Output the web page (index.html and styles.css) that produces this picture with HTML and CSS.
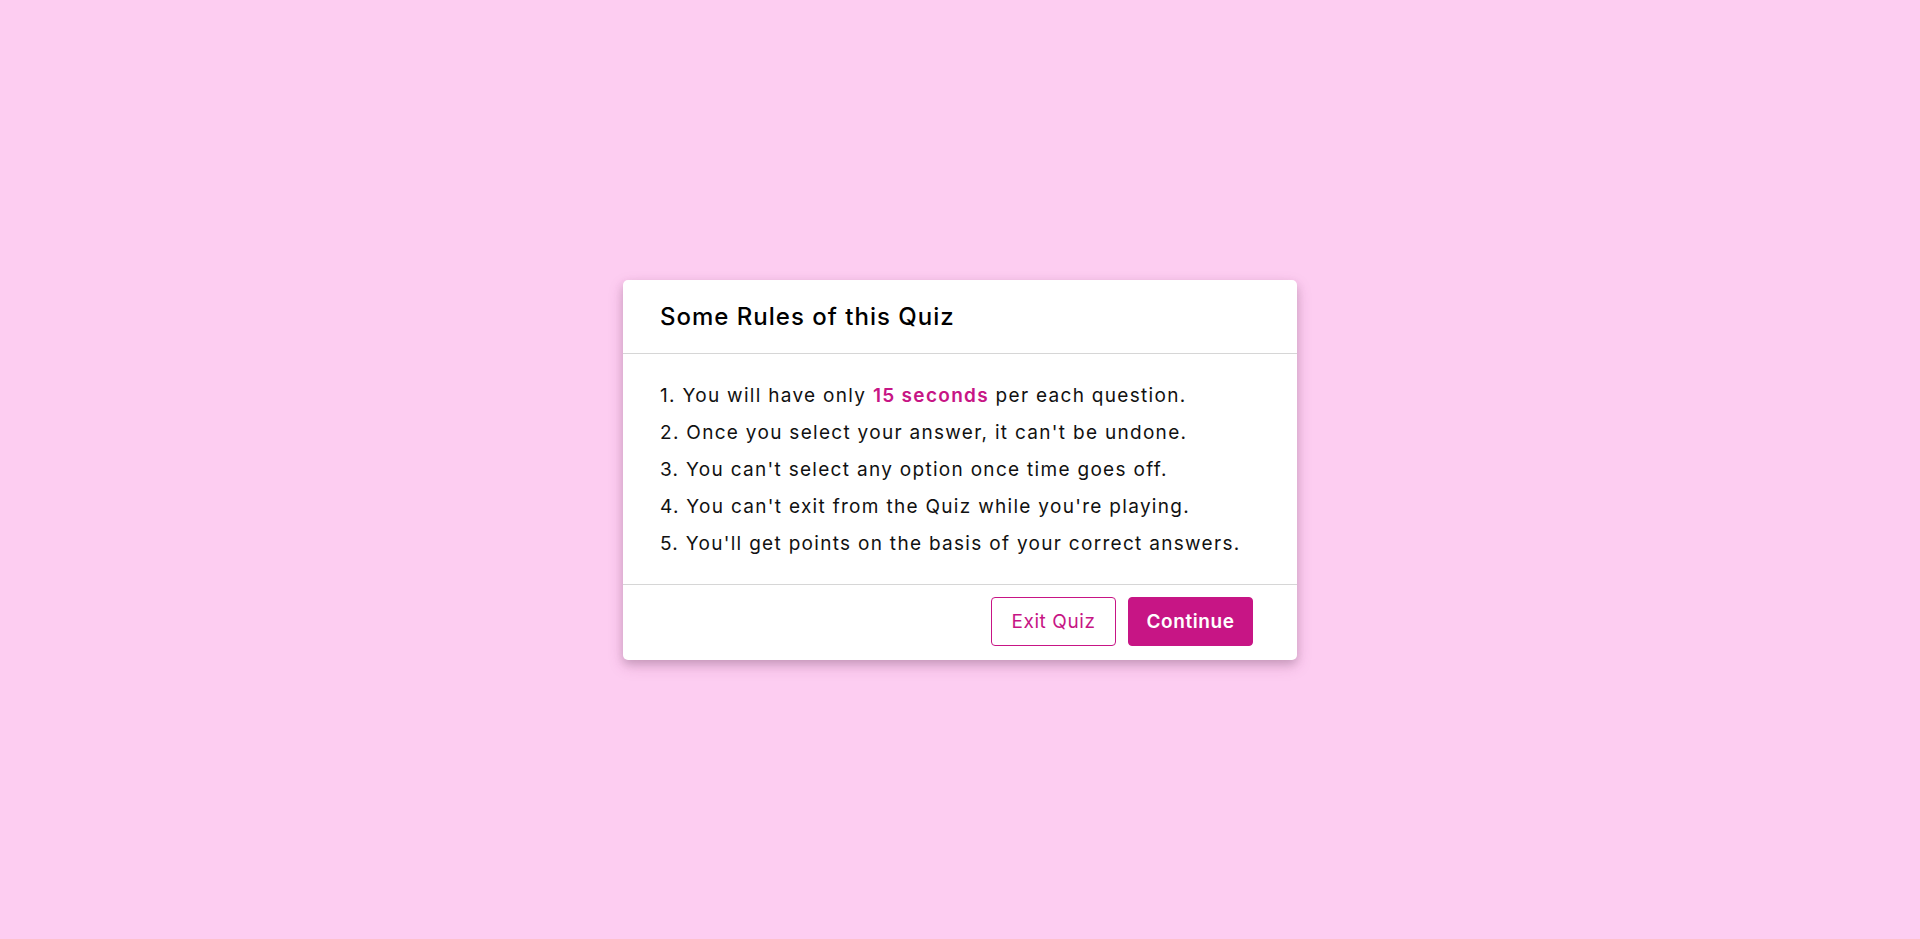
FILE: index.html
```html
<!DOCTYPE html>
<html lang="en">
<head>
<meta charset="utf-8">
<title>Quiz Rules</title>
<link rel="stylesheet" href="styles.css">
</head>
<body>
<main class="page">
  <section class="info-box">
    <header class="info-title">Some Rules of this Quiz</header>
    <div class="info-list">
      <div class="info">1. You will have only <span class="accent">15 seconds</span> per each question.</div>
      <div class="info">2. Once you select your answer, it can't be undone.</div>
      <div class="info">3. You can't select any option once time goes off.</div>
      <div class="info">4. You can't exit from the Quiz while you're playing.</div>
      <div class="info">5. You'll get points on the basis of your correct answers.</div>
    </div>
    <footer class="buttons">
      <button class="btn quit">Exit Quiz</button>
      <button class="btn restart">Continue</button>
    </footer>
  </section>
</main>
</body>
</html>
```

FILE: styles.css
```css
* { box-sizing: border-box; margin: 0; padding: 0; }
html, body { height: 100%; }
body {
  background: #fdcdf1;
  font-family: "Inter", "Open Sans", sans-serif;
  color: #111;
}
.page {
  height: 100%;
  display: flex;
  align-items: center;
  justify-content: center;
}
.info-box {
  width: 674px;
  height: 380px;
  background: #fff;
  border-radius: 5px;
  box-shadow: 0 4px 10px rgba(0,0,0,0.15), 0 6px 16px rgba(120,40,100,0.18);
  display: flex;
  flex-direction: column;
}
.info-title {
  height: 74px;
  border-bottom: 1px solid #d6d6d6;
  padding: 0 37px;
  display: flex;
  align-items: center;
  font-size: 24px;
  font-weight: 500;
  color: #000;
  letter-spacing: 1px;
}
.info-list {
  flex: 1;
  padding: 23px 37px 0;
  border-bottom: 1px solid #d6d6d6;
}
.info {
  font-size: 19px;
  line-height: 37px;
  color: #111;
  letter-spacing: 1.3px;
  white-space: nowrap;
}
.accent { color: #c71585; font-weight: 600; }
.buttons {
  height: 75px;
  display: flex;
  justify-content: flex-end;
  align-items: center;
  gap: 12px;
  padding: 0 44px 1px 0;
}
.btn {
  width: 125px;
  height: 49px;
  border-radius: 4px;
  font-family: inherit;
  font-size: 19px;
  letter-spacing: 0.6px;
  border: 1px solid #c71585;
  cursor: pointer;
}
.quit { background: #fff; color: #c71585; font-weight: 400; }
.restart { background: #c71585; color: #fff; font-weight: 600; }
```
